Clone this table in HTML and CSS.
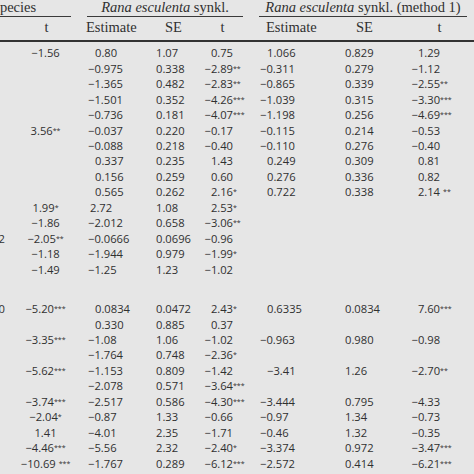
FILE: index.html
```html
<!DOCTYPE html>
<html>
<head>
<meta charset="utf-8">
<link rel="stylesheet" href="styles.css">
</head>
<body>
<div class="crop">
<table class="stats">
<colgroup>
<col class="w0"><col class="w1"><col class="w2"><col class="w3"><col class="w4"><col class="w5"><col class="w6"><col class="w7">
</colgroup>
<thead>
<tr class="groups">
<th colspan="2" class="g"><div class="gl gl-first">Species</div></th>
<th colspan="3" class="g"><div class="gl"><i>Rana esculenta</i> synkl.</div></th>
<th colspan="3" class="g"><div class="gl"><i>Rana esculenta</i> synkl. (method 1)</div></th>
</tr>
<tr class="heads">
<th></th><th class="h1">t</th><th class="h-est">Estimate</th><th class="h-se">SE</th><th class="h-t">t</th><th class="h-est2">Estimate</th><th class="h-se2">SE</th><th class="h-t2">t</th>
</tr>
</thead>
<tbody>
<tr class="first"><td class="c0"></td><td class="c1">−1.56</td><td class="c2 p">0.80</td><td class="c3">1.07</td><td class="c4">0.75</td><td class="c5 p">1.066</td><td class="c6">0.829</td><td class="c7">1.29</td></tr>
<tr><td class="c0"></td><td class="c1"></td><td class="c2">−0.975</td><td class="c3">0.338</td><td class="c4">−2.89<span class="hang"><sup class="s">**</sup></span></td><td class="c5">−0.311</td><td class="c6">0.279</td><td class="c7">−1.12</td></tr>
<tr><td class="c0"></td><td class="c1"></td><td class="c2">−1.365</td><td class="c3">0.482</td><td class="c4">−2.83<span class="hang"><sup class="s">**</sup></span></td><td class="c5">−0.865</td><td class="c6">0.339</td><td class="c7">−2.55<span class="hang"><sup class="s">**</sup></span></td></tr>
<tr><td class="c0"></td><td class="c1"></td><td class="c2">−1.501</td><td class="c3">0.352</td><td class="c4">−4.26<span class="hang"><sup class="s">***</sup></span></td><td class="c5">−1.039</td><td class="c6">0.315</td><td class="c7">−3.30<span class="hang"><sup class="s">***</sup></span></td></tr>
<tr><td class="c0"></td><td class="c1"></td><td class="c2">−0.736</td><td class="c3">0.181</td><td class="c4">−4.07<span class="hang"><sup class="s">***</sup></span></td><td class="c5">−1.198</td><td class="c6">0.256</td><td class="c7">−4.69<span class="hang"><sup class="s">***</sup></span></td></tr>
<tr><td class="c0"></td><td class="c1">3.56<sup class="s">**</sup></td><td class="c2">−0.037</td><td class="c3">0.220</td><td class="c4">−0.17</td><td class="c5">−0.115</td><td class="c6">0.214</td><td class="c7">−0.53</td></tr>
<tr><td class="c0"></td><td class="c1"></td><td class="c2">−0.088</td><td class="c3">0.218</td><td class="c4">−0.40</td><td class="c5">−0.110</td><td class="c6">0.276</td><td class="c7">−0.40</td></tr>
<tr><td class="c0"></td><td class="c1"></td><td class="c2 p">0.337</td><td class="c3">0.235</td><td class="c4">1.43</td><td class="c5 p">0.249</td><td class="c6">0.309</td><td class="c7">0.81</td></tr>
<tr><td class="c0"></td><td class="c1"></td><td class="c2 p">0.156</td><td class="c3">0.259</td><td class="c4">0.60</td><td class="c5 p">0.276</td><td class="c6">0.336</td><td class="c7">0.82</td></tr>
<tr><td class="c0"></td><td class="c1"></td><td class="c2 p">0.565</td><td class="c3">0.262</td><td class="c4">2.16<span class="hang"><sup class="s">*</sup></span></td><td class="c5 p">0.722</td><td class="c6">0.338</td><td class="c7">2.14<span class="hang"><sup class="s sp">**</sup></span></td></tr>
<tr><td class="c0"></td><td class="c1">1.99<sup class="s">*</sup></td><td class="c2 p2">2.72</td><td class="c3">1.08</td><td class="c4">2.53<span class="hang"><sup class="s">*</sup></span></td><td class="c5"></td><td class="c6"></td><td class="c7"></td></tr>
<tr><td class="c0"></td><td class="c1">−1.86</td><td class="c2">−2.012</td><td class="c3">0.658</td><td class="c4">−3.06<span class="hang"><sup class="s">**</sup></span></td><td class="c5"></td><td class="c6"></td><td class="c7"></td></tr>
<tr><td class="c0">2</td><td class="c1">−2.05<sup class="s">**</sup></td><td class="c2">−0.0666</td><td class="c3">0.0696</td><td class="c4">−0.96</td><td class="c5"></td><td class="c6"></td><td class="c7"></td></tr>
<tr><td class="c0"></td><td class="c1">−1.18</td><td class="c2">−1.944</td><td class="c3">0.979</td><td class="c4">−1.99<span class="hang"><sup class="s">*</sup></span></td><td class="c5"></td><td class="c6"></td><td class="c7"></td></tr>
<tr><td class="c0"></td><td class="c1">−1.49</td><td class="c2">−1.25</td><td class="c3">1.23</td><td class="c4">−1.02</td><td class="c5"></td><td class="c6"></td><td class="c7"></td></tr>
<tr class="spacer"><td colspan="8"></td></tr>
<tr><td class="c0">0</td><td class="c1">−5.20<sup class="s">***</sup></td><td class="c2 p">0.0834</td><td class="c3">0.0472</td><td class="c4">2.43<span class="hang"><sup class="s">*</sup></span></td><td class="c5 p">0.6335</td><td class="c6">0.0834</td><td class="c7">7.60<span class="hang"><sup class="s">***</sup></span></td></tr>
<tr><td class="c0"></td><td class="c1"></td><td class="c2 p">0.330</td><td class="c3">0.885</td><td class="c4">0.37</td><td class="c5"></td><td class="c6"></td><td class="c7"></td></tr>
<tr><td class="c0"></td><td class="c1">−3.35<sup class="s">***</sup></td><td class="c2">−1.08</td><td class="c3">1.06</td><td class="c4">−1.02</td><td class="c5">−0.963</td><td class="c6">0.980</td><td class="c7">−0.98</td></tr>
<tr><td class="c0"></td><td class="c1"></td><td class="c2">−1.764</td><td class="c3">0.748</td><td class="c4">−2.36<span class="hang"><sup class="s">*</sup></span></td><td class="c5"></td><td class="c6"></td><td class="c7"></td></tr>
<tr><td class="c0"></td><td class="c1">−5.62<sup class="s">***</sup></td><td class="c2">−1.153</td><td class="c3">0.809</td><td class="c4">−1.42</td><td class="c5 p">−3.41</td><td class="c6">1.26</td><td class="c7">−2.70<span class="hang"><sup class="s">**</sup></span></td></tr>
<tr><td class="c0"></td><td class="c1"></td><td class="c2">−2.078</td><td class="c3">0.571</td><td class="c4">−3.64<span class="hang"><sup class="s">***</sup></span></td><td class="c5"></td><td class="c6"></td><td class="c7"></td></tr>
<tr><td class="c0"></td><td class="c1">−3.74<sup class="s">***</sup></td><td class="c2">−2.517</td><td class="c3">0.586</td><td class="c4">−4.30<span class="hang"><sup class="s">***</sup></span></td><td class="c5">−3.444</td><td class="c6">0.795</td><td class="c7">−4.33</td></tr>
<tr><td class="c0"></td><td class="c1">−2.04<sup class="s">*</sup></td><td class="c2">−0.87</td><td class="c3">1.33</td><td class="c4">−0.66</td><td class="c5">−0.97</td><td class="c6">1.34</td><td class="c7">−0.73</td></tr>
<tr><td class="c0"></td><td class="c1">1.41</td><td class="c2">−4.01</td><td class="c3">2.35</td><td class="c4">−1.71</td><td class="c5">−0.46</td><td class="c6">1.32</td><td class="c7">−0.35</td></tr>
<tr><td class="c0"></td><td class="c1">−4.46<sup class="s">***</sup></td><td class="c2">−5.56</td><td class="c3">2.32</td><td class="c4">−2.40<span class="hang"><sup class="s">*</sup></span></td><td class="c5">−3.374</td><td class="c6">0.972</td><td class="c7">−3.47<span class="hang"><sup class="s">***</sup></span></td></tr>
<tr><td class="c0"></td><td class="c1">−10.69<sup class="s sp">***</sup></td><td class="c2">−1.767</td><td class="c3">0.289</td><td class="c4">−6.12<span class="hang"><sup class="s">***</sup></span></td><td class="c5">−2.572</td><td class="c6">0.414</td><td class="c7">−6.21<span class="hang"><sup class="s">***</sup></span></td></tr>
</tbody>
</table>
</div>
</body>
</html>
```

FILE: styles.css
```css
html, body {
  margin: 0;
  padding: 0;
  overflow: hidden;
  background: #e6e6e6;
}
body {
  width: 474px;
  height: 474px;
  color: #333333;
}
.crop {
  margin-top: -1px;
  margin-left: -40px;
}
.stats {
  border-collapse: separate;
  border-spacing: 0;
  table-layout: fixed;
  width: 515px;
}
.w0 { width: 46px; }
.w1 { width: 73px; }
.w2 { width: 71px; }
.w3 { width: 47px; }
.w4 { width: 54px; }
.w5 { width: 84px; }
.w6 { width: 65px; }
.w7 { width: 75px; }

.stats th {
  font-family: "Liberation Serif", serif;
  font-size: 14.5px;
  font-weight: normal;
  line-height: 16px;
  padding: 0;
  color: #303030;
  white-space: nowrap;
}
.groups .g { text-align: center; }
.gl {
  margin: 0 8px;
  padding-bottom: 1px;
  border-bottom: 1px solid #3a3a3a;
}
.gl-first {
  margin-left: 0;
  padding-right: 3px;
}
.heads th {
  padding-top: 2px;
  padding-bottom: 5px;
  border-bottom: 2px solid #333333;
}
.heads .h1 { text-align: center; padding-left: 8px; }
.heads .h-est { text-align: left; padding-left: 7px; }
.heads .h-se { text-align: center; }
.heads .h-t { text-align: center; padding-left: 6px; padding-right: 9px; }
.heads .h-est2 { text-align: left; padding-left: 15px; }
.heads .h-se2 { text-align: left; padding-left: 21px; }
.heads .h-t2 { text-align: center; padding-left: 4px; }

.stats td {
  font-family: "Open Sans", "Noto Sans", sans-serif;
  font-size: 11.2px;
  line-height: 15.45px;
  height: 15.45px;
  padding: 0;
  white-space: nowrap;
  color: #303030;
}
.stats tr.first td { padding-top: 3.3px; }
.stats tr.spacer td { height: 24px; }

.c0 { text-align: right; padding-right: 1px !important; }
.c1 { text-align: center; padding-left: 6px !important; }
.c2 { text-align: left; padding-left: 9px !important; }
.c2.p { padding-left: 16px !important; }
.c2.p2 { padding-left: 11px !important; }
.c3 { text-align: left; padding-left: 6px !important; }
.c4 { text-align: right; padding-right: 18px !important; }
.c5 { text-align: left; padding-left: 9px !important; }
.c5.p { padding-left: 16px !important; }
.c6 { text-align: left; padding-left: 10px !important; }
.c7 { text-align: right; padding-right: 35px !important; }

.hang {
  display: inline-block;
  width: 0;
  overflow: visible;
  text-align: left;
}
.s {
  font-size: 7px;
  line-height: 0;
  vertical-align: 2px;
  letter-spacing: 0;
}
.s.sp { padding-left: 3px; }
```
